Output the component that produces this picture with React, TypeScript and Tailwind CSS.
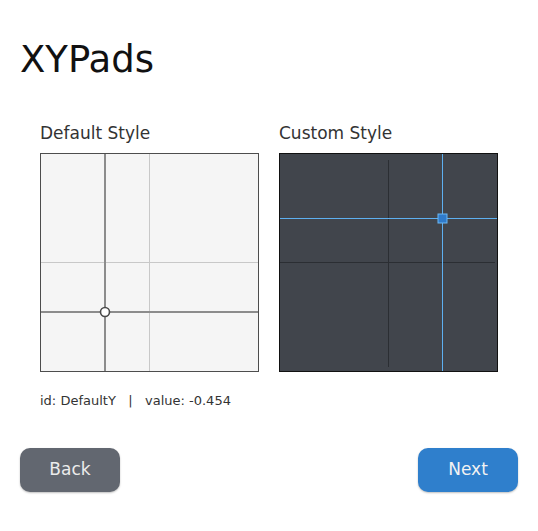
import React from 'react';

const PAD = 217;

const DefaultPad: React.FC = () => (
  <div className="w-[219px] h-[219px] border border-[#4d4d4d] bg-[#f5f5f5]">
    <svg width={PAD} height={PAD} className="block">
      <line x1={108.5} y1={0} x2={108.5} y2={PAD} stroke="#c8c8c8" strokeWidth={1} />
      <line x1={0} y1={108.5} x2={PAD} y2={108.5} stroke="#c8c8c8" strokeWidth={1} />
      <line x1={64} y1={0} x2={64} y2={PAD} stroke="#8c8c8c" strokeWidth={2} />
      <line x1={0} y1={158} x2={PAD} y2={158} stroke="#8c8c8c" strokeWidth={2} />
      <circle cx={64} cy={158} r={4.5} fill="#ffffff" stroke="#4a4a4a" strokeWidth={1.6} />
    </svg>
  </div>
);

const CustomPad: React.FC = () => (
  <div className="w-[219px] h-[219px] border border-[#111111] bg-[#41454c]">
    <svg width={PAD} height={PAD} className="block">
      <line x1={108.5} y1={6} x2={108.5} y2={PAD - 4} stroke="#2b2e33" strokeWidth={1} />
      <line x1={0} y1={108.5} x2={PAD - 2} y2={108.5} stroke="#2b2e33" strokeWidth={1} />
      <line x1={162.5} y1={0} x2={162.5} y2={PAD} stroke="#5eb0f0" strokeWidth={1} />
      <line x1={0} y1={64.5} x2={PAD} y2={64.5} stroke="#5eb0f0" strokeWidth={1} />
      <rect x={158} y={60} width={9} height={9} fill="#2f7bcb" stroke="#6cb8f2" strokeWidth={1} />
    </svg>
  </div>
);

const App: React.FC = () => {
  return (
    <div
      className="w-[538px] h-[531px] bg-white text-[#222222] px-5 pt-[39px]"
      style={{ fontFamily: '"DejaVu Sans", sans-serif' }}
    >
      <h1 className="text-[37px] leading-[42px] text-[#111111]">XYPads</h1>

      <div className="px-5 mt-[42px]">
        <div className="flex gap-5">
          <div>
            <div className="text-[17px] leading-[20px] mb-[10px] text-[#333333]">Default Style</div>
            <DefaultPad />
          </div>
          <div>
            <div className="text-[17px] leading-[20px] mb-[10px] text-[#333333]">Custom Style</div>
            <CustomPad />
          </div>
        </div>
        <div className="mt-[21px] text-[13px] leading-[16px] text-[#333333] whitespace-pre">
          {'id: DefaultY   |   value: -0.454'}
        </div>
      </div>

      <div className="flex justify-between mt-[39px]">
        <button className="w-[100px] h-[44px] rounded-[10px] bg-[#626770] text-[#ececec] text-[17px] shadow-[0_1px_2px_rgba(0,0,0,0.25)]">
          Back
        </button>
        <button className="w-[100px] h-[44px] rounded-[10px] bg-[#2f7fcc] text-[#f2f2f2] text-[17px] shadow-[0_1px_2px_rgba(0,0,0,0.25)]">
          Next
        </button>
      </div>
    </div>
  );
};

export default App;
